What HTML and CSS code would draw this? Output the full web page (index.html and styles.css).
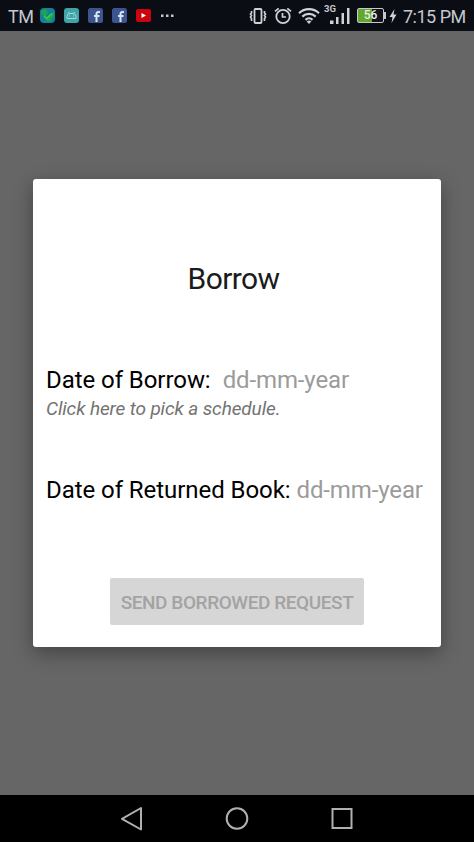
FILE: index.html
```html
<!DOCTYPE html>
<html lang="en">
<head>
    <meta charset="UTF-8">
    <meta name="viewport" content="width=device-width, initial-scale=1.0">
    <title>Borrow</title>
    <link rel="stylesheet" href="styles.css">
</head>
<body>
    <div class="screen">
        <div class="status-bar">
            <span class="carrier">TM</span>
            <div class="notifications">
                <svg width="15" height="15" viewBox="0 0 15 15">
                    <rect width="15" height="15" rx="4" fill="#167f9b"/>
                    <path d="M1 3l4-2 3 3-2 4-4-1zM5 11l3-3 5-4 1 3-3 6-3 1z" fill="#1fa552"/>
                    <path d="M4 8l3 2.500 5-5" fill="none" stroke="#35c94b" stroke-width="1.800"/>
                </svg>
                <svg width="15" height="15" viewBox="0 0 15 15">
                    <rect width="15" height="15" rx="3" fill="#3fa3a8"/>
                    <path d="M3 10.500V8.500a3 3 0 0 1 3-3h3a3 3 0 0 1 3 3v2zM4.500 4l1 1.500M10.500 4l-1 1.500" fill="none" stroke="#a4dcdd"/>
                    <path d="M5 8h1M9 8h1" stroke="#a4dcdd"/>
                </svg>
                <svg width="15" height="15" viewBox="0 0 15 15">
                    <rect width="15" height="15" rx="2.500" fill="#3b5590"/>
                    <path d="M8.500 14V6q0-2 2-2H12M6 8h5.500" fill="none" stroke="#dce3f0" stroke-width="2"/>
                </svg>
                <svg width="15" height="15" viewBox="0 0 15 15">
                    <rect width="15" height="15" rx="2.500" fill="#3b5590"/>
                    <path d="M8.500 14V6q0-2 2-2H12M6 8h5.500" fill="none" stroke="#dce3f0" stroke-width="2"/>
                </svg>
                <svg width="15" height="15" viewBox="0 0 15 15">
                    <rect y="1" width="15" height="13" rx="2" fill="#c9040e"/>
                    <path d="M5.500 5v5l4.500-2.500z" fill="#fff"/>
                </svg>
                <svg width="15" height="15" viewBox="0 0 15 15">
                    <path d="M1 6.500h2.500v2.500h-2.500zM6 6.500h2.500v2.500h-2.500zM11 6.500h2.500v2.500h-2.500z" fill="#c3c5c9"/>
                </svg>
            </div>
            <div class="indicators">
                <svg class="vibrate" width="18" height="18" viewBox="0 0 18 18">
                    <rect x="5.500" y="2" width="7" height="14" rx="1" fill="none" stroke="#d0d2d5" stroke-width="1.800"/>
                    <path d="M2.500 4v2l-1 1 1 1.500-1 1.500 1 1.500v2.500M15.500 4v2l1 1-1 1.500 1 1.500-1 1.500v2.500" fill="none" stroke="#d0d2d5" stroke-width="1.700"/>
                </svg>
                <svg class="alarm" width="18" height="18" viewBox="0 0 18 18">
                    <circle cx="9" cy="9.500" r="6.700" fill="none" stroke="#d0d2d5" stroke-width="1.800"/>
                    <path d="M8.500 6v4h3.500M1 4.300l3.700-3M17 4.300l-3.700-3" fill="none" stroke="#d0d2d5" stroke-width="1.700"/>
                </svg>
                <svg class="wifi" width="22" height="18" viewBox="0 0 22 18">
                    <path d="M1 6.200a14.500 14.500 0 0 1 20 0M4.300 9.600a9.800 9.800 0 0 1 13.400 0M7.500 12.900a5 5 0 0 1 7 0" fill="none" stroke="#d0d2d5" stroke-width="2.200"/>
                    <path d="M8.700 14.500q2.300-1.800 4.600 0l-2.300 2.500z" fill="#d0d2d5"/>
                </svg>
                <div class="signal">
                    <span class="network">3G</span>
                    <svg width="20" height="17" viewBox="0 0 20 17">
                        <path d="M0 12.500h3.500v3.500h-3.500zM6 9h2.500v7h-2.500zM11.500 5h2.500v11h-2.500zM17 0h2.500v16h-2.500z" fill="#d0d2d5"/>
                    </svg>
                </div>
                <div class="battery"><span class="level">56</span></div>
                <div class="battery-tip"></div>
                <svg class="bolt" width="8" height="16" viewBox="0 0 8 16">
                    <path d="M5.500 1L.5 9h3L2.500 15l5-8.500h-3z" fill="#d0d2d5"/>
                </svg>
                <span class="time">7:15 PM</span>
            </div>
        </div>

        <div class="overlay">
            <div class="dialog">
                <h1>Borrow</h1>
                <div class="date-row borrow-date">
                    <label>Date of Borrow:</label>
                    <span class="date">dd-mm-year</span>
                </div>
                <p class="hint">Click here to pick a schedule.</p>
                <div class="date-row return-date">
                    <label>Date of Returned Book:</label>
                    <span class="date">dd-mm-year</span>
                </div>
                <button type="button" class="send" disabled>SEND BORROWED REQUEST</button>
            </div>
        </div>

        <div class="nav-bar">
            <svg width="24" height="26" viewBox="0 0 24 26">
                <path d="M21 2v21.500L2 12.800z" fill="none" stroke="#b0b0b0" stroke-width="2" stroke-linejoin="round"/>
            </svg>
            <svg width="24" height="26" viewBox="0 0 24 26">
                <circle cx="12" cy="12.500" r="10.300" fill="none" stroke="#b0b0b0" stroke-width="2"/>
            </svg>
            <svg width="24" height="26" viewBox="0 0 24 26">
                <rect x="2.500" y="3" width="19" height="19" fill="none" stroke="#b0b0b0" stroke-width="2"/>
            </svg>
        </div>
    </div>
</body>
</html>
```

FILE: styles.css
```css
body {
    margin: 0;
    font-family: Roboto, sans-serif;
    background-color: #666;
}
svg {
    display: block;
    flex-shrink: 0;
}
.screen {
    display: flex;
    flex-direction: column;
    height: 842px;
    overflow: hidden;
}
.status-bar {
    display: flex;
    align-items: center;
    height: 31px;
    padding: 0 8px;
    background-color: #0b0d15;
    color: #c6c8cc;
    white-space: nowrap;
}
.carrier {
    width: 32px;
    padding-top: 1px;
    font-size: 18px;
    letter-spacing: -0.4px;
    line-height: 31px;
}
.notifications {
    display: flex;
    gap: 9px;
}
.indicators {
    display: flex;
    align-items: center;
    margin-left: auto;
}
.alarm {
    margin-left: 7px;
}
.wifi {
    margin-left: 6px;
}
.signal {
    display: flex;
    flex-direction: column;
    align-items: flex-end;
    width: 26px;
    height: 23px;
    margin-left: 4px;
}
.network {
    align-self: flex-start;
    height: 4px;
    font-size: 9.5px;
    font-weight: bold;
    line-height: 9px;
}
.battery {
    box-sizing: border-box;
    width: 27px;
    height: 15px;
    margin-left: 7px;
    border: 1.5px solid #c6c8cc;
    border-radius: 2px;
    background: linear-gradient(to right, #62a82c 55%, #10131a 55%);
    text-align: center;
}
.battery-tip {
    width: 2px;
    height: 7px;
    background-color: #c6c8cc;
}
.level {
    display: block;
    color: #eee;
    font-size: 12px;
    font-weight: 500;
    line-height: 13px;
}
.bolt {
    margin-left: 3px;
}
.time {
    width: 63px;
    padding-top: 1px;
    margin-left: 6px;
    font-size: 18px;
    letter-spacing: -0.5px;
    line-height: 31px;
}
.overlay {
    display: flex;
    flex: 1;
    flex-direction: column;
    align-items: center;
    justify-content: center;
    background-color: #666;
}
.dialog {
    box-sizing: border-box;
    display: flex;
    flex-direction: column;
    width: 408px;
    height: 468px;
    padding: 80px 13px 20px;
    border-radius: 3px;
    background-color: #fff;
    box-shadow: 0 6px 20px rgba(0, 0, 0, 0.35);
}
h1 {
    margin: 0 7px 0 0;
    color: #1b1b1b;
    font-size: 30px;
    font-weight: normal;
    letter-spacing: -0.6px;
    line-height: 40px;
    text-align: center;
}
.date-row {
    display: flex;
    color: #000;
    font-size: 24px;
    letter-spacing: -0.06px;
    line-height: 30px;
    white-space: nowrap;
}
.borrow-date {
    gap: 12px;
    margin-top: 66px;
}
.return-date {
    gap: 6px;
    margin-top: 53px;
}
.date {
    color: #9b9b9b;
    letter-spacing: -0.12px;
}
.hint {
    margin: 0;
    color: #737373;
    font-size: 19px;
    font-style: italic;
    letter-spacing: -0.12px;
    line-height: 27px;
}
.send {
    flex-shrink: 0;
    align-self: center;
    width: 254px;
    height: 47px;
    margin-top: 73px;
    padding: 2px 0 0;
    border: none;
    border-radius: 2px;
    background-color: #d6d6d6;
    color: #a3a3a3;
    font-family: Roboto, sans-serif;
    font-size: 19px;
    font-weight: 500;
    letter-spacing: -0.42px;
    white-space: nowrap;
}
.nav-bar {
    display: flex;
    align-items: center;
    justify-content: center;
    gap: 81px;
    height: 47px;
    background-color: #000;
}
```
